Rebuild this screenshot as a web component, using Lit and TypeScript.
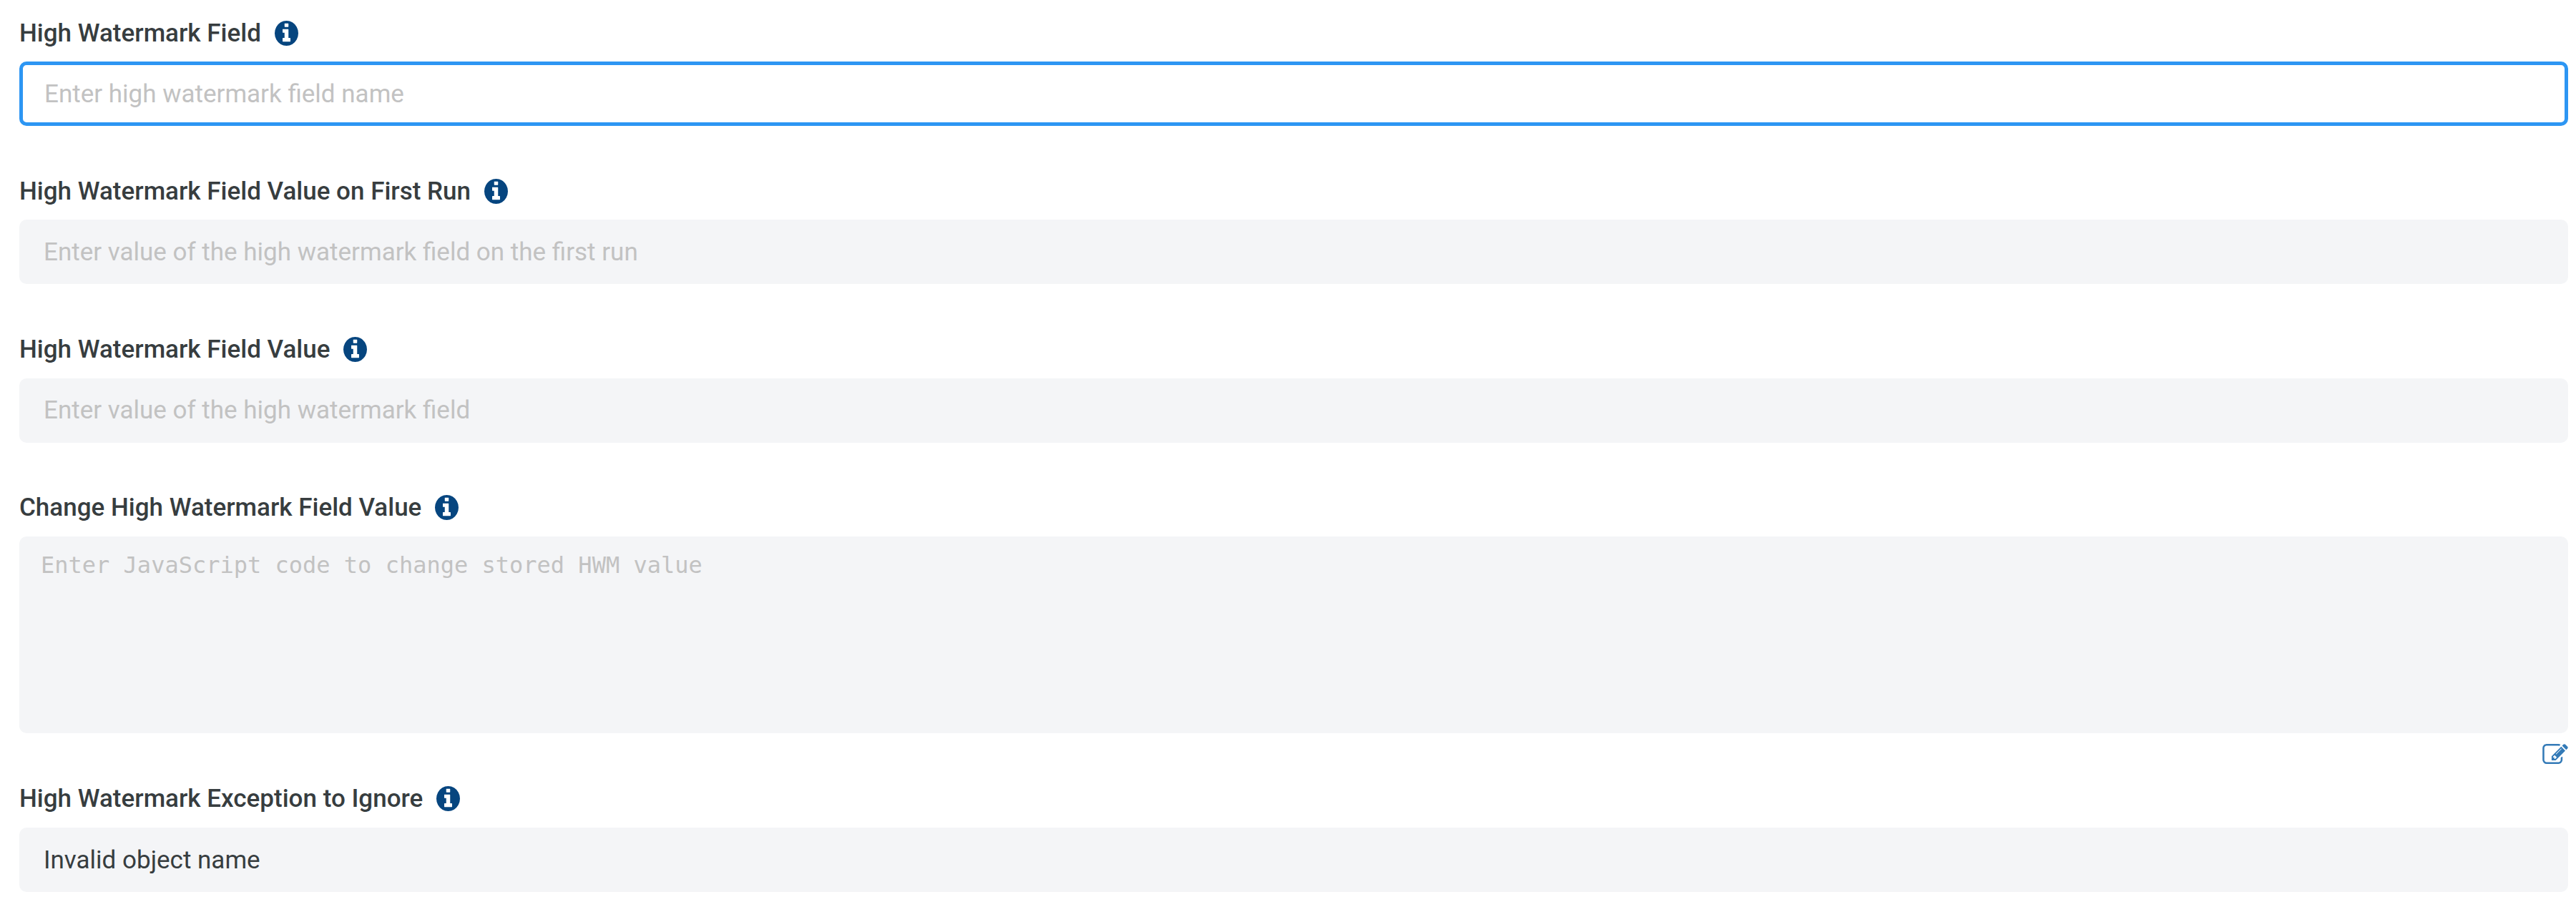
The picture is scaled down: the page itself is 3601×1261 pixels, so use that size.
import { LitElement, html, css } from "lit";
import { customElement } from "lit/decorators.js";

type Field = {
  label: string;
  placeholder?: string;
  value?: string;
  focused?: boolean;
  code?: boolean;
};

const FIELDS: Field[] = [
  { label: "High Watermark Field", placeholder: "Enter high watermark field name", focused: true },
  { label: "High Watermark Field Value on First Run", placeholder: "Enter value of the high watermark field on the first run" },
  { label: "High Watermark Field Value", placeholder: "Enter value of the high watermark field" },
  { label: "Change High Watermark Field Value", placeholder: "Enter JavaScript code to change stored HWM value", code: true },
  { label: "High Watermark Exception to Ignore", value: "Invalid object name" },
];

const infoIcon = html`<svg class="info" viewBox="128 128 1536 1536" preserveAspectRatio="none" aria-hidden="true">
  <path fill="currentColor" fill-rule="evenodd" d="M1152 1376v-160q0-14-9-23t-23-9h-96v-512q0-14-9-23t-23-9h-320q-14 0-23 9t-9 23v160q0 14 9 23t23 9h96v320h-96q-14 0-23 9t-9 23v160q0 14 9 23t23 9h448q14 0 23-9t9-23zm-128-896v-160q0-14-9-23t-23-9h-192q-14 0-23 9t-9 23v160q0 14 9 23t23 9h192q14 0 23-9t9-23zm640 416q0 209-103 385.500t-279.500 279.500-385.500 103-385.500-103-279.500-279.500-103-385.500 103-385.500 279.500-279.500 385.500-103 385.500 103 279.500 279.500 103 385.500z"/>
</svg>`;

const editIcon = html`<svg class="edit" viewBox="0 128 1792 1408" aria-hidden="true">
  <path fill="currentColor" d="M888 1184l116-116-152-152-116 116v56h96v96h56zm440-720q-16-16-33 1l-350 350q-17 17-1 33t33-1l350-350q17-17 1-33zm80 594v190q0 119-84.500 203.500t-203.500 84.500h-832q-119 0-203.500-84.500t-84.500-203.500v-832q0-119 84.500-203.500t203.500-84.500h832q63 0 117 25 15 7 18 23 3 17-9 29l-49 49q-14 14-32 8-23-6-45-6h-832q-66 0-113 47t-47 113v832q0 66 47 113t113 47h832q66 0 113-47t47-113v-126q0-13 9-22l64-64q15-15 35-7t20 29zm-96-738l288 288-672 672h-288v-288zm444 132l-92 92-288-288 92-92q28-28 68-28t68 28l152 152q28 28 28 68t-28 68z"/>
</svg>`;

@customElement("app-root")
export class AppRoot extends LitElement {
  static styles = css`
    :host {
      display: block;
      background: #fff;
      font-family: Roboto, "Liberation Sans", sans-serif;
      color: #373d3f;
    }
    .form {
      display: flex;
      flex-direction: column;
      padding: 23.5px 11px 14px 27px;
    }
    .field {
      display: flex;
      flex-direction: column;
    }
    .field + .field {
      margin-top: 68.5px;
    }
    .field.after-code {
      margin-top: 26.7px;
    }
    .label {
      display: flex;
      align-items: center;
      gap: 19px;
      height: 45px;
      margin-bottom: 17.7px;
      font-size: 35px;
      font-weight: 500;
    }
    .info {
      width: 33px;
      height: 35px;
      color: #06457f;
    }
    .control {
      box-sizing: border-box;
      width: 100%;
      height: 90px;
      padding: 0 34px;
      border: 0;
      border-radius: 10px;
      background: #f4f5f7;
      font: 400 35px Roboto, "Liberation Sans", sans-serif;
      color: #373d3f;
      outline: none;
      display: block;
    }
    .control::placeholder {
      color: #c2c2c2;
      opacity: 1;
    }
    .control.focused {
      background: #fff;
      border: 5px solid #2d96f3;
      padding: 0 30px;
    }
    .control.code {
      height: 275px;
      padding: 21px 30px;
      resize: none;
      font: 400 32px "DejaVu Sans Mono", "Liberation Mono", monospace;
    }
    .tools {
      display: flex;
      justify-content: flex-end;
      padding-top: 15px;
    }
    .edit {
      width: 36px;
      height: 28px;
      color: #337ab7;
    }
  `;

  renderControl(f: Field) {
    if (f.code) {
      return html`<textarea class="control code" disabled placeholder=${f.placeholder ?? ""}></textarea>
        <div class="tools">${editIcon}</div>`;
    }
    return html`<input
      class="control ${f.focused ? "focused" : ""}"
      ?disabled=${!f.focused}
      placeholder=${f.placeholder ?? ""}
      .value=${f.value ?? ""}
    />`;
  }

  render() {
    return html`
      <div class="form">
        ${FIELDS.map(
          (f, i) => html`
            <div class="field ${FIELDS[i - 1]?.code ? "after-code" : ""}">
              <div class="label"><span>${f.label}</span>${infoIcon}</div>
              ${this.renderControl(f)}
            </div>
          `
        )}
      </div>
    `;
  }
}

declare global {
  interface HTMLElementTagNameMap {
    "app-root": AppRoot;
  }
}
